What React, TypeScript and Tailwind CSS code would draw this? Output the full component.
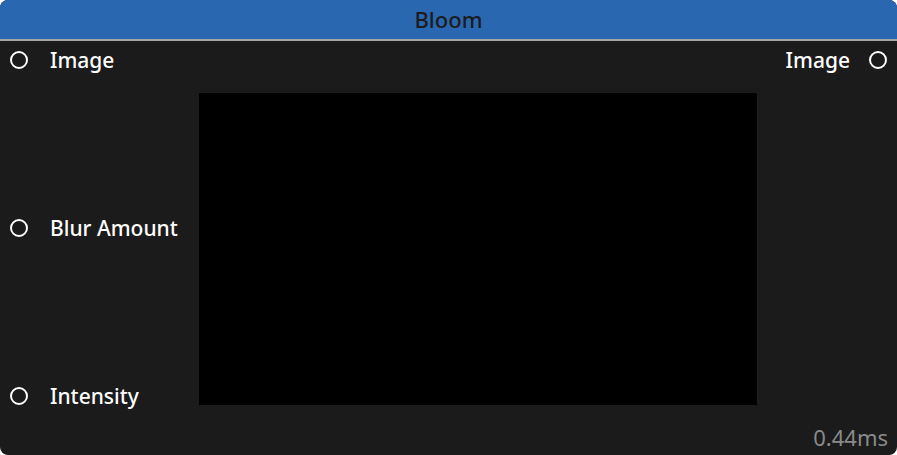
function Port() {
  return <span className="block w-[18px] h-[18px] rounded-full border-2 border-white shrink-0" />;
}

export default function App() {
  return (
    <div className="w-[897px] h-[455px] bg-white" style={{ fontFamily: '"Noto Sans", sans-serif' }}>
      <div className="w-full h-full rounded-[8px] overflow-hidden bg-[#1b1b1b] flex flex-col">
        <div className="h-[39px] bg-[#2a67b1] flex items-center justify-center text-[22px] font-medium text-[#1c1c1c]">
          Bloom
        </div>
        <div className="h-[2px] bg-[#a6a6a6]" />
        <div className="flex pt-[7px] h-[367px]">
          <div className="w-[199px] flex flex-col justify-between text-white text-[21px] font-medium">
            {["Image", "Blur Amount", "Intensity"].map((l) => (
              <div key={l} className="h-[24px] flex items-center pl-[10px] gap-[22px]">
                <Port />
                <span className="leading-[24px]">{l}</span>
              </div>
            ))}
          </div>
          <div className="w-[558px] h-[312px] mt-[45px] bg-black" />
          <div className="flex-1 flex justify-end">
            <div className="h-[24px] flex items-center pr-[10px] gap-[19px] text-white text-[21px] font-medium">
              <span className="leading-[24px]">Image</span>
              <Port />
            </div>
          </div>
        </div>
        <div className="mt-[17px] pr-[9px] text-right text-[22px] leading-[24px] text-[#8a8a8a]">0.44ms</div>
      </div>
    </div>
  );
}
